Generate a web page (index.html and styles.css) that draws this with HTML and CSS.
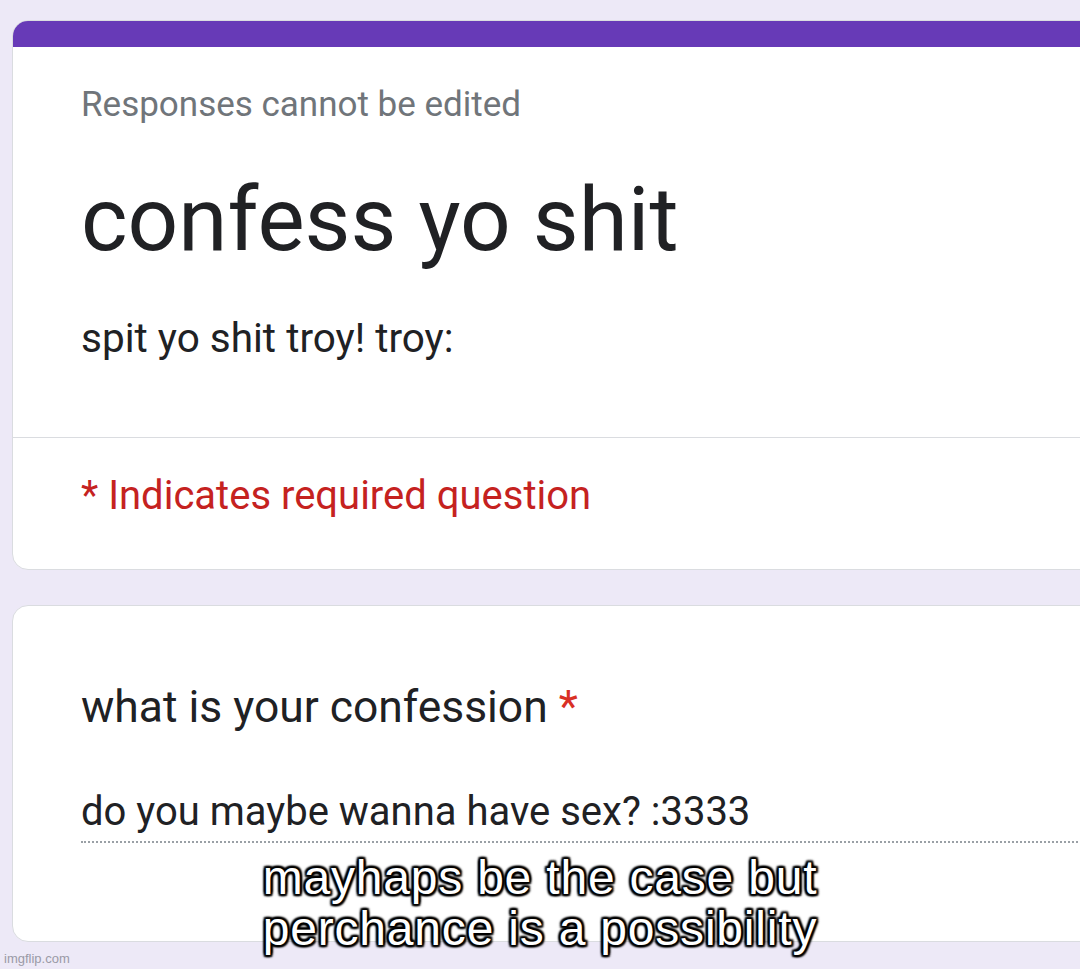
FILE: index.html
```html
<!DOCTYPE html>
<html>
<head>
<meta charset="utf-8">
<link rel="stylesheet" href="styles.css">
</head>
<body>
<div class="page">
  <div class="card card-head">
    <div class="bar"></div>
    <div class="head-body">
      <div class="note">Responses cannot be edited</div>
      <h1 class="title">confess yo shit</h1>
      <div class="desc">spit yo shit troy! troy:</div>
    </div>
    <div class="req">* Indicates required question</div>
  </div>
  <div class="card card-q">
    <div class="question">what is your confession <span class="star">*</span></div>
    <div class="answer">do you maybe wanna have sex? :3333</div>
  </div>
</div>
<div class="caption">mayhaps be the case but<br>perchance is a possibility</div>
<div class="wm">imgflip.com</div>
</body>
</html>
```
FILE: styles.css
```css
html, body {
  margin: 0;
  padding: 0;
  overflow: hidden;
  width: 1080px;
  height: 969px;
}
body {
  background: #ede9f7;
  font-family: Roboto, "Noto Sans", sans-serif;
  position: relative;
}
.page {
  padding: 20px 0 0 12px;
  display: flex;
  flex-direction: column;
  gap: 35px;
  width: 1110px;
}
.card {
  background: #fff;
  border: 1px solid #dadce0;
  border-radius: 16px;
  overflow: hidden;
}
.bar {
  height: 27px;
  background: #673ab7;
  margin: -1px -1px 0 -1px;
}
.head-body {
  padding: 38px 0 0 68px;
  height: 391px;
  box-sizing: border-box;
  border-bottom: 1px solid #dadce0;
}
.note {
  font-size: 35px;
  color: #70757a;
  line-height: 40px;
}
.title {
  margin: 45px 0 0 0;
  font-weight: 400;
  font-size: 89px;
  line-height: 100px;
  color: #202124;
}
.desc {
  margin-top: 44px;
  font-size: 40.5px;
  line-height: 48px;
  color: #202124;
}
.req {
  padding: 34px 0 0 68px;
  height: 131px;
  box-sizing: border-box;
  font-size: 40px;
  line-height: 48px;
  color: #c5221f;
}
.card-q {
  height: 337px;
  box-sizing: border-box;
  padding: 75px 0 0 68px;
}
.question {
  font-size: 44.4px;
  color: #202124;
  line-height: 52px;
}
.star { color: #d93025; }
.answer {
  margin-top: 55px;
  font-size: 40px;
  color: #202124;
  line-height: 48px;
  padding-bottom: 5px;
  border-bottom: 2px dotted #9aa0a6;
}
.caption {
  position: absolute;
  left: 0;
  right: 0;
  top: 852px;
  text-align: center;
  font-family: "Liberation Sans", Arial, sans-serif;
  font-size: 48px;
  line-height: 51px;
  letter-spacing: 0.8px;
  color: #fff;
  text-shadow: 2px 2px 2px #000, -2px -2px 2px #000, 2px -2px 2px #000, -2px 2px 2px #000, 0 2px 2px #000, 0 -2px 2px #000, 2px 0 2px #000, -2px 0 2px #000;
}
.wm {
  position: absolute;
  left: 4px;
  bottom: 3px;
  font-family: "Liberation Sans", Arial, sans-serif;
  font-size: 13px;
  color: #9a9aa6;
}
```
